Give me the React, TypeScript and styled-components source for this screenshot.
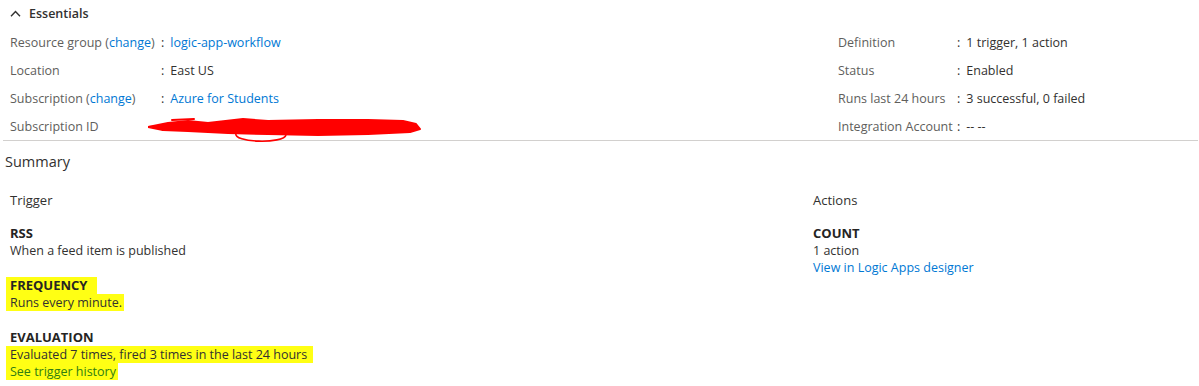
import React from 'react';
import styled, { createGlobalStyle } from 'styled-components';

const GlobalStyle = createGlobalStyle`
    html, body {
        margin: 0;
        padding: 0;
        background: #ffffff;
    }
    body {
        font-family: "Open Sans", "Noto Sans", Arial, sans-serif;
        font-size: 12.5px;
        color: #323130;
    }
`;

const Page = styled.div`
    width: 1199px;
    height: 386px;
    overflow: hidden;
    background: #fff;
`;

const EssentialsHeader = styled.div`
    display: flex;
    align-items: center;
    gap: 8px;
    height: 28px;
    padding: 0 0 2px 10px;
    box-sizing: border-box;
    font-weight: 600;
    color: #323130;
`;

const EssentialsGrid = styled.div`
    display: grid;
    grid-template-columns: 828px 1fr;
    border-bottom: 1px solid #d2d0ce;
    margin: 0 1px 0 3px;
    padding-left: 7px;
`;

const Column = styled.div`
    display: flex;
    flex-direction: column;
`;

const Row = styled.div<{ labelWidth: number }>`
    display: grid;
    grid-template-columns: ${p => p.labelWidth}px 1fr;
    height: 28px;
    align-items: center;
`;

const Label = styled.span`
    color: #605e5c;
    white-space: nowrap;
`;

const Value = styled.span`
    position: relative;
    color: #323130;
    white-space: nowrap;
    &::before {
        content: ":";
        margin-right: 6px;
    }
`;

const Link = styled.a`
    color: #0078d4;
    text-decoration: none;
    cursor: pointer;
`;

// the redaction mark drawn over the subscription id
const Scribble = styled.svg`
    position: absolute;
    left: -13px;
    top: -3px;
`;

const SummaryTitle = styled.div`
    font-size: 14.5px;
    padding: 11px 0 0 5px;
    height: 51px;
    box-sizing: border-box;
    color: #323130;
`;

const SummaryGrid = styled.div`
    display: grid;
    grid-template-columns: 803px 1fr;
    padding-left: 10px;
`;

const ColumnTitle = styled.div`
    font-size: 13px;
    line-height: 17px;
    margin-bottom: 16px;
`;

const Section = styled.div`
    display: flex;
    flex-direction: column;
    align-items: flex-start;
    margin-bottom: 18px;
    line-height: 17px;
`;

const SectionName = styled.span`
    font-weight: 700;
    font-size: 13px;
    color: #252423;
`;

const Highlight = styled.span<{ right?: number }>`
    background: #ffff14;
    margin-left: -4px;
    padding: 0 ${p => p.right ?? 2}px 0 4px;
`;

const MarkedLink = styled.span`
    color: #2f7d12;
`;

const Chevron = () => (
    <svg width="11" height="7" viewBox="0 0 11 7">
        <path d="M1 6.2 L5.5 1.6 L10 6.2" fill="none" stroke="#323130" strokeWidth="1.4" />
    </svg>
);

function App() {
    return (
        <Page>
            <GlobalStyle />
            <EssentialsHeader>
                <Chevron />
                <span>Essentials</span>
            </EssentialsHeader>
            <EssentialsGrid>
                <Column>
                    <Row labelWidth={151}>
                        <Label>Resource group (<Link>change</Link>)</Label>
                        <Value><Link>logic-app-workflow</Link></Value>
                    </Row>
                    <Row labelWidth={151}>
                        <Label>Location</Label>
                        <Value>East US</Value>
                    </Row>
                    <Row labelWidth={151}>
                        <Label>Subscription (<Link>change</Link>)</Label>
                        <Value><Link>Azure for Students</Link></Value>
                    </Row>
                    <Row labelWidth={151}>
                        <Label>Subscription ID</Label>
                        <Value>
                            <Scribble width="275" height="30" viewBox="0 0 275 30">
                                <path
                                    d="M0 12 L20 8 L40 6 L60 8 L95 4 L120 6 L170 5 L220 5 L255 6 L268 9 L272 14 L262 17 L220 19 L170 20 L120 19 L80 18 L40 16 L15 15 Z"
                                    fill="#ff0000" stroke="#ff0000" strokeWidth="2" strokeLinejoin="round"
                                />
                                <path d="M0 12 L22 11 M24 5 L46 4" fill="none" stroke="#ff0000" strokeWidth="2" strokeLinecap="round" />
                                <path d="M88 18 C84 28 136 29 138 20" fill="none" stroke="#ff0000" strokeWidth="1.6" />
                            </Scribble>
                        </Value>
                    </Row>
                </Column>
                <Column>
                    <Row labelWidth={119}>
                        <Label>Definition</Label>
                        <Value>1 trigger, 1 action</Value>
                    </Row>
                    <Row labelWidth={119}>
                        <Label>Status</Label>
                        <Value>Enabled</Value>
                    </Row>
                    <Row labelWidth={119}>
                        <Label>Runs last 24 hours</Label>
                        <Value>3 successful, 0 failed</Value>
                    </Row>
                    <Row labelWidth={119}>
                        <Label>Integration Account</Label>
                        <Value>-- --</Value>
                    </Row>
                </Column>
            </EssentialsGrid>
            <SummaryTitle>Summary</SummaryTitle>
            <SummaryGrid>
                <Column>
                    <ColumnTitle>Trigger</ColumnTitle>
                    <Section>
                        <SectionName>RSS</SectionName>
                        <span>When a feed item is published</span>
                    </Section>
                    <Section>
                        <Highlight right={10}><SectionName>FREQUENCY</SectionName></Highlight>
                        <Highlight>Runs every minute.</Highlight>
                    </Section>
                    <Section>
                        <SectionName>EVALUATION</SectionName>
                        <Highlight right={6}>Evaluated 7 times, fired 3 times in the last 24 hours</Highlight>
                        <Highlight><MarkedLink>See trigger history</MarkedLink></Highlight>
                    </Section>
                </Column>
                <Column>
                    <ColumnTitle>Actions</ColumnTitle>
                    <Section>
                        <SectionName>COUNT</SectionName>
                        <span>1 action</span>
                        <Link>View in Logic Apps designer</Link>
                    </Section>
                </Column>
            </SummaryGrid>
        </Page>
    );
}

export default App;
